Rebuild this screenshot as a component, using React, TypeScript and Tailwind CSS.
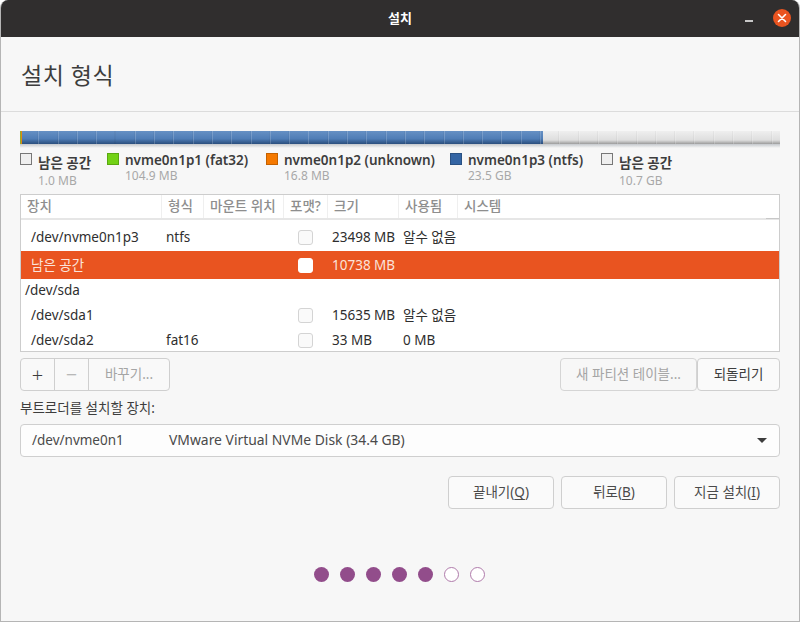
import React from 'react';

const columns = 'grid grid-cols-[141px_42px_80px_44px_71px_59px_1fr]';

const legend = [
    { name: '남은 공간', size: '1.0 MB', swatch: 'bg-[#efefef] border-[#777]', free: true, width: 'w-[87px]' },
    { name: 'nvme0n1p1 (fat32)', size: '104.9 MB', swatch: 'bg-[#73d216] border-[#5aa811]', free: false, width: 'w-[159px]' },
    { name: 'nvme0n1p2 (unknown)', size: '16.8 MB', swatch: 'bg-[#f57900] border-[#c46100]', free: false, width: 'w-[184px]' },
    { name: 'nvme0n1p3 (ntfs)', size: '23.5 GB', swatch: 'bg-[#3465a4] border-[#2a5183]', free: false, width: 'w-[151px]' },
    { name: '남은 공간', size: '10.7 GB', swatch: 'bg-[#efefef] border-[#777]', free: true, width: 'w-[100px]' },
];

const rows = [
    { device: '/dev/nvme0n1p3', type: 'ntfs', size: '23498 MB', used: '알수 없음', h: 'h-[28px]', check: true },
    { device: '남은 공간', type: '', size: '10738 MB', used: '', h: 'h-[28px]', check: true, selected: true },
    { device: '/dev/sda', type: '', size: '', used: '', h: 'h-[22px]', check: false, top: true },
    { device: '/dev/sda1', type: '', size: '15635 MB', used: '알수 없음', h: 'h-[28px]', check: true },
    { device: '/dev/sda2', type: 'fat16', size: '33 MB', used: '0 MB', h: 'h-[22px]', check: true },
];

const headers = ['장치', '형식', '마운트 위치', '포맷?', '크기', '사용됨', '시스템'];

const Legend = () => (
    <div className="flex mt-[3px] h-[38px]">
        {legend.map((item, i) => (
            <div key={i} className={`flex items-start ${item.width}`}>
                <span className={`w-[12px] h-[12px] border shrink-0 mt-[2px] ${item.swatch}`} />
                <div className={`ml-[6px] ${item.free ? 'pt-[3px]' : ''}`}>
                    <div className="text-[13.5px] leading-[18px] font-semibold text-[#3d3d3d] whitespace-nowrap">{item.name}</div>
                    <div className={`text-[12px] leading-[14px] text-[#a8a8a8] whitespace-nowrap ${item.free ? 'mt-[2px]' : ''}`}>{item.size}</div>
                </div>
            </div>
        ))}
    </div>
);

const PartitionBar = () => (
    <div className="relative h-[17px]">
        <div className="flex h-[13px]">
            <div className="w-[1px] bg-[#8fae2a]" />
            <div className="w-[1px] bg-[#e08a10]" />
            <div className="w-[521px] bg-gradient-to-b from-[#6690c4] via-[#4f7db6] via-60% to-[#2b4f7e]" />
            <div className="flex-1 bg-gradient-to-b from-[#efefef] via-[#dedede] via-70% to-[#9c9c9c]" />
        </div>
        <div className="h-[4px] bg-gradient-to-b from-[#c4c8cc] to-[#f7f7f7]" />
        <div className="absolute inset-x-0 top-0 h-[13px] bg-[repeating-linear-gradient(90deg,transparent_0,transparent_17.3px,rgba(0,0,0,0.04)_17.3px,rgba(0,0,0,0.04)_18.3px,rgba(255,255,255,0.18)_18.3px,rgba(255,255,255,0.18)_19.3px)]" />
    </div>
);

const PartitionTable = () => (
    <div className="mt-[5px] border border-[#cdcdcd] bg-white text-[13.5px] text-[#2e2e2e] h-[158px] overflow-hidden">
        <div className={`${columns} relative h-[25px] border-b-2 border-[#e6e6e6] text-[#8e8e8e]`}>
            {headers.map((h, i) => (
                <div key={h} className={`flex items-center pl-[6px] font-medium whitespace-nowrap ${i < 6 ? 'border-r border-[#efefef]' : ''}`}>{h}</div>
            ))}
            <div className="absolute right-0 bottom-[-1px] w-[13px] h-px bg-[#c8c8c8]" />
        </div>
        <div className="h-[3px]" />
        {rows.map((r) => (
            <div key={r.device} className={`${columns} ${r.h} items-center ${r.selected ? 'bg-[#e95420] text-[#fbe3da]' : ''}`}>
                <div className={`whitespace-nowrap ${r.top ? 'pl-[4px]' : 'pl-[10px]'}`}>{r.device}</div>
                <div className="pl-[4px]">{r.type}</div>
                <div />
                <div className="pl-[14px]">
                    {r.check && (
                        <div className={`w-[15px] h-[15px] rounded-[3px] border ${r.selected ? 'bg-white border-white' : 'bg-[#fafafa] border-[#d4d4d4]'}`} />
                    )}
                </div>
                <div className="pl-[4px] whitespace-nowrap">{r.size}</div>
                <div className="pl-[4px] whitespace-nowrap">{r.used}</div>
                <div />
            </div>
        ))}
    </div>
);

const Button = ({ label, accel }: { label: string; accel: string }) => (
    <button className="h-[33px] w-[106px] rounded-[4px] border border-[#cfcfcf] bg-[#fafafa] text-[13.5px] text-[#4a4a4a]">
        {label}(<span className="underline underline-offset-2">{accel}</span>)
    </button>
);

export default function App() {
    return (
        <div className="w-[800px] h-[622px] bg-[#f7f7f7] border-x border-b border-[#b5b5b5] rounded-t-[8px] overflow-hidden text-[#3d3d3d] font-['Noto_Sans','Noto_Sans_CJK_KR',sans-serif]">
            {/* Title bar */}
            <div className="relative h-[37px] bg-[#302e2e] flex items-center justify-center text-white text-[13px] font-bold">
                설치
                <div className="absolute right-[46px] top-[20px] w-[8px] h-[1.5px] bg-[#c8c8c8]" />
                <div className="absolute right-[8px] top-[9px] w-[18px] h-[18px] rounded-full bg-[#e95420] flex items-center justify-center">
                    <svg width="10" height="10" viewBox="0 0 10 10">
                        <path d="M1.5 1.5l7 7M8.5 1.5l-7 7" stroke="#fff" strokeWidth="1.6" strokeLinecap="round" />
                    </svg>
                </div>
            </div>

            {/* Page heading */}
            <div className="h-[75px] border-b border-[#dcdcdc] pl-[20px] pt-[2px] flex items-center">
                <h1 className="text-[23px] font-normal tracking-[0.5px] text-[#3d3d3d]">설치 형식</h1>
            </div>

            <div className="px-[19px] pt-[19px]">
                <PartitionBar />
                <Legend />
                <PartitionTable />

                {/* Table actions */}
                <div className="flex justify-between mt-[6px] h-[33px] text-[13.5px]">
                    <div className="flex border border-[#cfcfcf] rounded-[4px] bg-[#f9f9f9]">
                        <div className="w-[34px] flex items-center justify-center border-r border-[#cfcfcf] text-[20px] font-light text-[#3d3d3d]">+</div>
                        <div className="w-[34px] flex items-center justify-center border-r border-[#cfcfcf] text-[20px] font-light text-[#aaa]">−</div>
                        <div className="w-[80px] flex items-center justify-center text-[#a5a5a5]">바꾸기...</div>
                    </div>
                    <div className="flex">
                        <div className="w-[137px] flex items-center justify-center border border-[#d5d5d5] rounded-[4px] text-[#a5a5a5] whitespace-nowrap">새 파티션 테이블...</div>
                        <div className="w-[83px] flex items-center justify-center border border-[#cfcfcf] rounded-[4px] bg-[#fafafa] text-[#3d3d3d]">되돌리기</div>
                    </div>
                </div>

                {/* Boot loader */}
                <div className="mt-[8px] text-[13.5px] leading-[18px] text-[#3d3d3d]">부트로더를 설치할 장치:</div>
                <div className="mt-[7px] h-[33px] border border-[#cfcfcf] rounded-[4px] bg-[#fdfdfd] flex items-center pl-[11px] pr-[12px] text-[13.9px] text-[#4a4a4a]">
                    <span className="w-[137px] text-[13.5px]">/dev/nvme0n1</span>
                    <span className="flex-1">VMware Virtual NVMe Disk (34.4 GB)</span>
                    <svg width="10" height="5" viewBox="0 0 10 5"><path d="M0 0h10L5 5z" fill="#3d3d3d" /></svg>
                </div>

                {/* Navigation */}
                <div className="flex justify-end gap-[7px] mt-[19px]">
                    <Button label="끝내기" accel="Q" />
                    <Button label="뒤로" accel="B" />
                    <Button label="지금 설치" accel="I" />
                </div>

                {/* Progress dots */}
                <div className="flex justify-center gap-[11px] mt-[58px] pr-[2px]">
                    {[0, 1, 2, 3, 4].map((i) => (
                        <span key={i} className="w-[15px] h-[15px] rounded-full bg-[#924d8b]" />
                    ))}
                    {[5, 6].map((i) => (
                        <span key={i} className="w-[15px] h-[15px] rounded-full bg-white border border-[#b07bab]" />
                    ))}
                </div>
            </div>
        </div>
    );
}
